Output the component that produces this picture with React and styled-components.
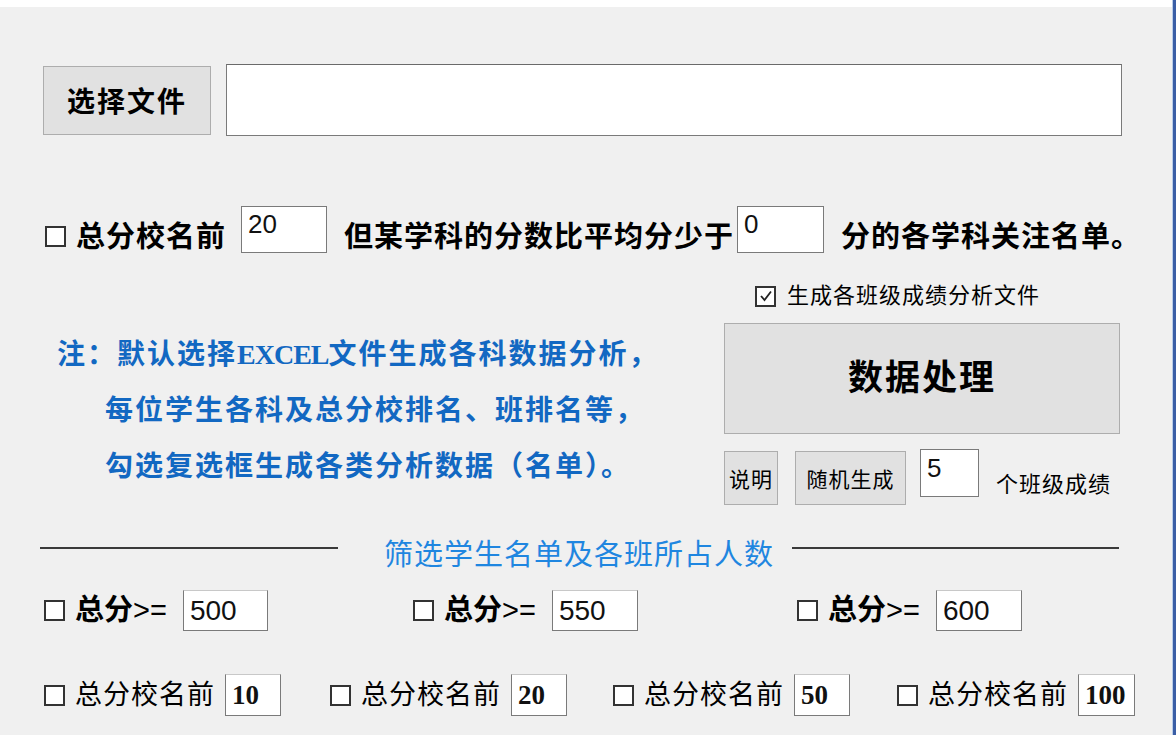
import React from "react";
import styled, { createGlobalStyle } from "styled-components";

const sans = `"Liberation Sans", "Noto Sans CJK SC", sans-serif`;
const serif = `"Liberation Serif", "Noto Sans CJK SC", serif`;

const GlobalStyle = createGlobalStyle`
  html, body {
    margin: 0;
    padding: 0;
    background: #f0f0f0;
  }
  * { box-sizing: border-box; }
`;

const Window = styled.div`
  display: flex;
  width: 1176px;
  height: 735px;
  overflow: hidden;
  background: #f0f0f0;
  font-family: ${sans};
  color: #000;
`;

const Content = styled.div`
  flex: 1;
  display: flex;
  flex-direction: column;
`;

const RightEdge = styled.div`
  width: 4px;
  background: linear-gradient(to right, #b9cde8 0 1px, #3a5ea6 1px 100%);
`;

const TopStrip = styled.div`
  height: 7px;
  background: #ffffff;
`;

const FileRow = styled.div`
  display: flex;
  align-items: center;
  gap: 15px;
  margin-top: 57px;
  padding-left: 43px;
`;

const WinButton = styled.button`
  display: flex;
  align-items: center;
  justify-content: center;
  width: ${(p) => p.w}px;
  height: ${(p) => p.h}px;
  padding: 0 0 ${(p) => p.lift || 0}px 0;
  background: #e1e1e1;
  border: 1px solid #adadad;
  border-radius: 0;
  font-family: ${sans};
  font-size: ${(p) => p.size}px;
  font-weight: ${(p) => (p.bold ? 700 : 400)};
  letter-spacing: ${(p) => p.spacing || 1}px;
  color: #000;
`;

const PathBox = styled.input`
  width: 896px;
  height: 72px;
  background: #fff;
  border: 1px solid #7a7a7a;
  border-top-color: #6a6a6a;
  outline: none;
`;

const RankRow = styled.div`
  display: flex;
  align-items: center;
  height: 47px;
  margin-top: 70px;
  padding-left: 45px;
`;

const Box = styled.span`
  flex: none;
  display: inline-flex;
  align-items: center;
  justify-content: center;
  width: 21px;
  height: 21px;
  background: #fff;
  border: 2px solid #333;
  margin-top: ${(p) => p.dy || 0}px;
`;

const Label = styled.span`
  flex: none;
  font-size: ${(p) => p.size}px;
  font-weight: ${(p) => (p.bold ? 700 : 400)};
  letter-spacing: ${(p) => p.spacing ?? 1}px;
  line-height: 1;
  white-space: nowrap;
  margin-left: ${(p) => p.ml || 0}px;
  padding-top: ${(p) => p.dy || 0}px;
`;

const Ops = styled.span`
  font-weight: 400;
`;

const NumBox = styled.input`
  flex: none;
  width: ${(p) => p.w}px;
  height: ${(p) => p.h}px;
  margin-left: ${(p) => p.ml || 0}px;
  padding: ${(p) => (p.top ? "0 6px 10px 6px" : "0 6px")};
  background: #fff;
  border: 1px solid #7a7a7a;
  border-top-color: ${(p) => (p.sunken ? "#c8c8c8" : "#7a7a7a")};
  font-family: ${(p) => (p.serif ? serif : sans)};
  font-size: ${(p) => p.size}px;
  font-weight: ${(p) => (p.bold ? 700 : 400)};
  color: #111;
  outline: none;
`;

const Middle = styled.div`
  display: grid;
  grid-template-columns: 724px 396px;
  margin-top: 29px;
`;

const Notes = styled.div`
  padding-left: 57px;
  padding-top: 45px;
  font-family: ${serif};
  font-weight: 700;
  font-size: 28px;
  letter-spacing: 2px;
  color: #1268c2;
`;

const Latin = styled.span`
  letter-spacing: -1px;
`;

const NoteLine = styled.div`
  height: 56px;
  line-height: 56px;
  white-space: nowrap;
  padding-left: ${(p) => (p.indent ? 48 : 0)}px;
`;

const Actions = styled.div`
  display: flex;
  flex-direction: column;
`;

const OptionRow = styled.div`
  display: flex;
  align-items: center;
  height: 24px;
  padding-left: 31px;
  margin-top: 2px;
`;

const BigButtonWrap = styled.div`
  margin-top: 15px;
`;

const SmallRow = styled.div`
  display: flex;
  align-items: flex-start;
  margin-top: 15px;
`;

const SideNote = styled.span`
  font-size: 22px;
  letter-spacing: 1px;
  line-height: 1;
  margin-left: 17px;
  margin-top: 25px;
`;

const Divider = styled.div`
  display: flex;
  align-items: center;
  height: 40px;
  margin-top: 30px;
  padding-left: 40px;
`;

const Rule = styled.div`
  width: ${(p) => p.w}px;
  height: 2px;
  background: #3a3a3a;
  margin-bottom: 14px;
`;

const DividerTitle = styled.span`
  font-size: 29px;
  letter-spacing: 1px;
  line-height: 1;
  color: #1f86e0;
  margin: 0 18px 0 46px;
  white-space: nowrap;
`;

const ItemGrid = styled.div`
  display: grid;
  grid-template-columns: ${(p) => p.cols};
  align-items: center;
  height: ${(p) => p.h}px;
  margin-top: ${(p) => p.mt}px;
  padding-left: 44px;
`;

const Item = styled.div`
  display: flex;
  align-items: center;
`;

function CheckMark() {
  return (
    <svg width="14" height="14" viewBox="0 0 14 14">
      <polyline points="2,7 5.5,11 12,2.5" fill="none" stroke="#222" strokeWidth="1.8" />
    </svg>
  );
}

const scoreItems = [
  { v: "500", w: 85 },
  { v: "550", w: 86 },
  { v: "600", w: 86 },
];

const rankItems = [
  { v: "10", w: 56 },
  { v: "20", w: 56 },
  { v: "50", w: 56 },
  { v: "100", w: 57 },
];

export default function App() {
  return (
    <>
      <GlobalStyle />
      <Window>
        <Content>
          <TopStrip />

          <FileRow>
            <WinButton w={168} h={69} size={28} bold spacing={2}>选择文件</WinButton>
            <PathBox readOnly />
          </FileRow>

          <RankRow>
            <Box dy={14} />
            <Label size={29} bold ml={10} dy={16}>总分校名前</Label>
            <NumBox w={86} h={47} ml={15} size={26} top defaultValue="20" />
            <Label size={29} bold ml={17} dy={16}>但某学科的分数比平均分少于</Label>
            <NumBox w={87} h={47} ml={3} size={26} top defaultValue="0" />
            <Label size={29} bold ml={17} dy={16}>分的各学科关注名单。</Label>
          </RankRow>

          <Middle>
            <Notes>
              <NoteLine>注：默认选择<Latin>EXCEL</Latin>文件生成各科数据分析，</NoteLine>
              <NoteLine indent>每位学生各科及总分校排名、班排名等，</NoteLine>
              <NoteLine indent>勾选复选框生成各类分析数据（名单）。</NoteLine>
            </Notes>
            <Actions>
              <OptionRow>
                <Box>
                  <CheckMark />
                </Box>
                <Label size={22} ml={11}>生成各班级成绩分析文件</Label>
              </OptionRow>
              <BigButtonWrap>
                <WinButton w={396} h={111} size={35} bold spacing={2} lift={8}>数据处理</WinButton>
              </BigButtonWrap>
              <SmallRow>
                <WinButton w={54} h={54} size={21} style={{ marginTop: 2 }}>说明</WinButton>
                <WinButton w={111} h={54} size={21} style={{ marginLeft: 17, marginTop: 2 }}>随机生成</WinButton>
                <NumBox w={59} h={48} ml={14} size={26} top defaultValue="5" />
                <SideNote>个班级成绩</SideNote>
              </SmallRow>
            </Actions>
          </Middle>

          <Divider>
            <Rule w={298} />
            <DividerTitle>筛选学生名单及各班所占人数</DividerTitle>
            <Rule w={327} />
          </Divider>

          <ItemGrid cols="369px 384px auto" h={41} mt={15}>
            {scoreItems.map((it) => (
              <Item key={it.v}>
                <Box />
                <Label size={29} bold ml={10} spacing={0}>总分<Ops>&gt;=</Ops></Label>
                <NumBox w={it.w} h={41} ml={16} size={28} sunken defaultValue={it.v} />
              </Item>
            ))}
          </ItemGrid>

          <ItemGrid cols="286px 283px 284px auto" h={42} mt={43}>
            {rankItems.map((it) => (
              <Item key={it.v}>
                <Box />
                <Label size={27} ml={10} spacing={1}>总分校名前</Label>
                <NumBox w={it.w} h={42} ml={10} size={27} serif bold sunken defaultValue={it.v} />
              </Item>
            ))}
          </ItemGrid>
        </Content>
        <RightEdge />
      </Window>
    </>
  );
}
